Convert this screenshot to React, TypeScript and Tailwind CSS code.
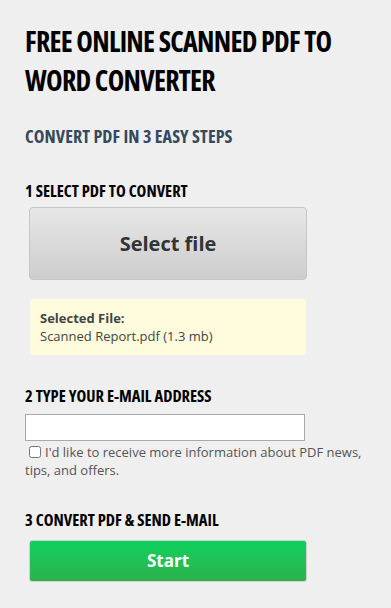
export default function App() {
  const cond = { fontFamily: '"Open Sans", "Liberation Sans Narrow", sans-serif', fontStretch: '75%' } as const;
  return (
    <div className="min-h-[608px] w-full bg-[#efefef] px-[25px] pt-[22px] pb-6 font-['Open_Sans',sans-serif]">
      <h1 style={cond} className="text-[28px] font-bold leading-[38.5px] tracking-[-0.7px] text-black">
        FREE ONLINE SCANNED PDF TO WORD CONVERTER
      </h1>
      <h2 style={cond} className="mt-[25px] text-[18px] font-bold leading-[24px] tracking-[0.1px] text-[#34495e]">
        CONVERT PDF IN 3 EASY STEPS
      </h2>

      <h3 style={cond} className="mt-[32px] text-[16.5px] font-bold leading-[22px] text-black">
        1 SELECT PDF TO CONVERT
      </h3>
      <button className="mt-[5px] ml-[4px] flex h-[73px] w-[278px] items-center justify-center rounded-[4px] border border-[#c6c6c6] bg-gradient-to-b from-[#e7e7e7] to-[#cdcdcd] text-[20px] font-bold text-[#333]">
        Select file
      </button>
      <div className="mt-[19px] ml-[5px] w-[276px] rounded-[2px] bg-[#fffbdd] px-[10px] py-[10px] text-[13px] leading-[18px] text-[#444]">
        <div className="font-bold">Selected File:</div>
        <div>Scanned Report.pdf (1.3 mb)</div>
      </div>

      <h3 style={cond} className="mt-[30px] text-[16.5px] font-bold leading-[22px] text-black">
        2 TYPE YOUR E-MAIL ADDRESS
      </h3>
      <input type="text" className="mt-[7px] block h-[27px] w-[280px] border border-[#aaa] bg-white" />
      <div className="mt-[2px] text-[13px] leading-[18px] text-[#555]">
        <input type="checkbox" className="ml-[4px] mr-[4px] h-[12px] w-[12px] align-[-1px]" />
        I'd like to receive more information about PDF news, tips, and offers.
      </div>

      <h3 style={cond} className="mt-[30px] text-[16.5px] font-bold leading-[22px] text-black">
        3 CONVERT PDF &amp; SEND E-MAIL
      </h3>
      <button className="mt-[9px] ml-[4px] flex h-[42px] w-[278px] items-center justify-center rounded-[3px] border border-[#d0d0d0] bg-gradient-to-b from-[#08d05f] to-[#2bb24b] text-[17px] font-bold text-white">
        Start
      </button>
    </div>
  );
}
